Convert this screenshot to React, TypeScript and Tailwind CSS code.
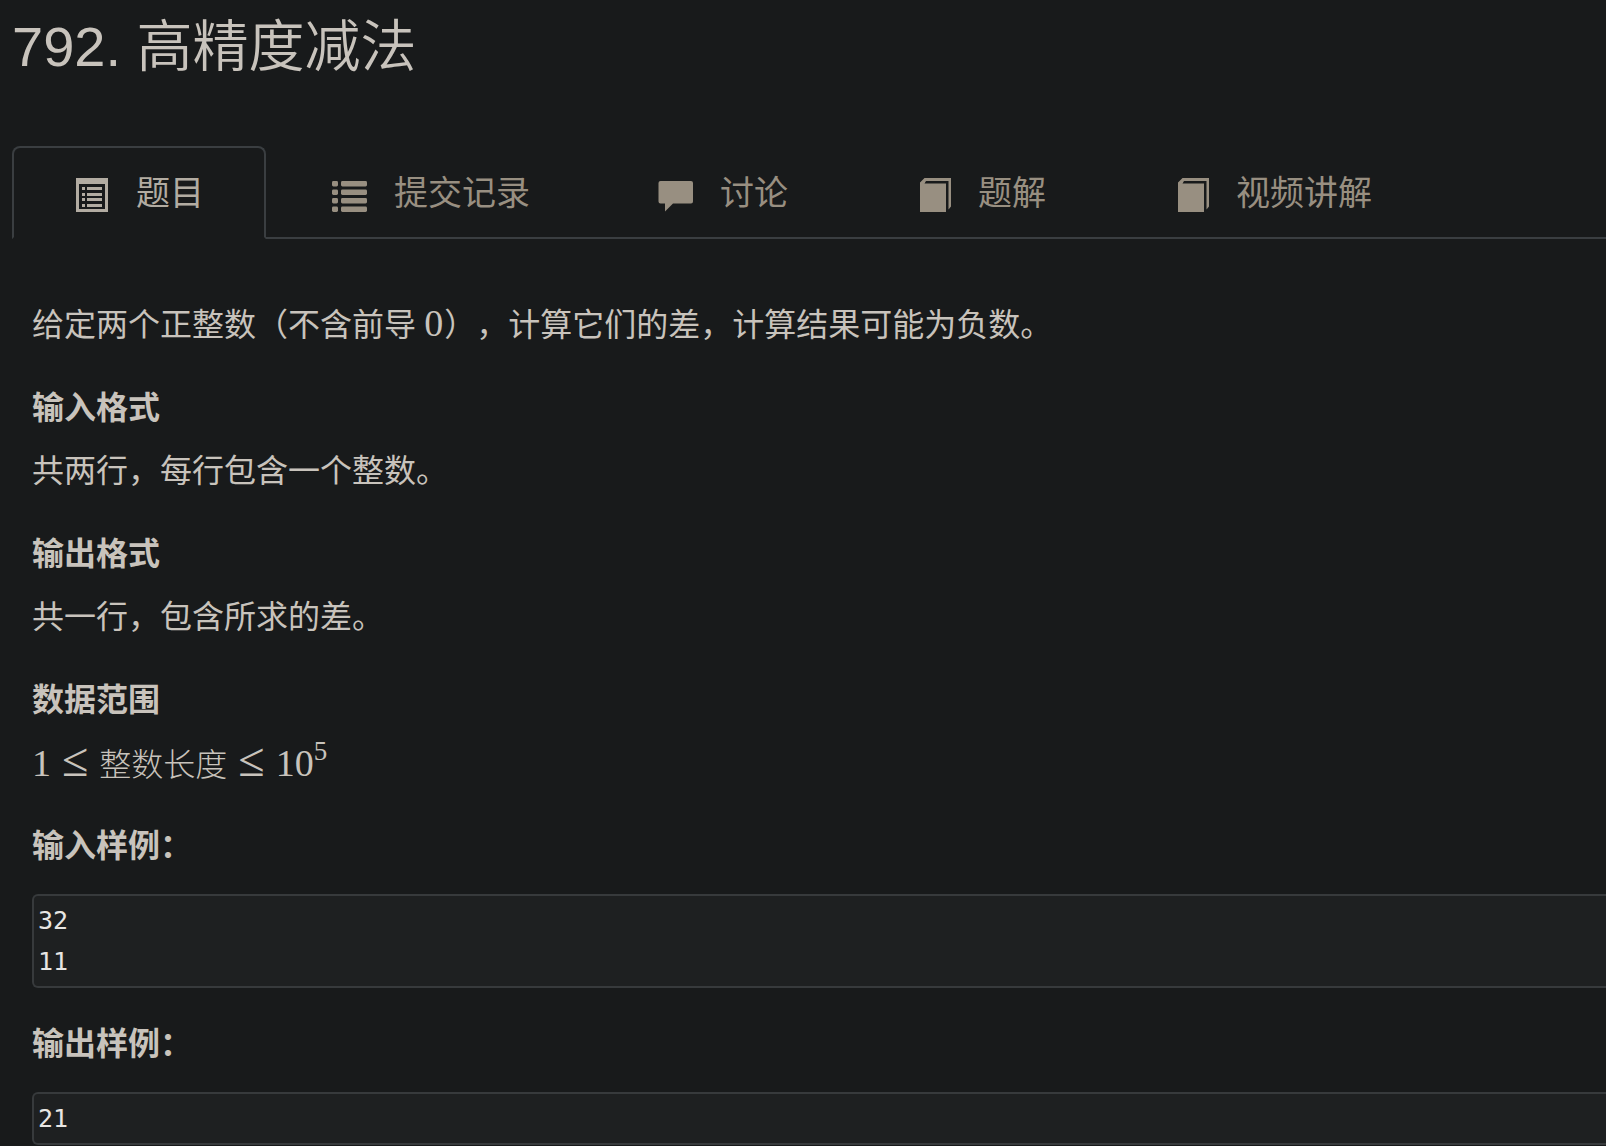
import type { ReactNode } from "react";

function ListAltIcon() {
  return (
    <svg viewBox="0 0 34 34" className="size-[34px]" fill="currentColor" aria-hidden="true">
      <path fillRule="evenodd" d="M2 0h32v34H2zM5 6v25h26V6z" />
      <path d="M8 9h3v3H8zM13 9h15v3H13zM8 15h3v3H8zM13 15h15v3H13zM8 20h3v3H8zM13 20h15v3H13zM8 26h3v3H8zM13 26h15v3H13z" />
    </svg>
  );
}

function ListIcon() {
  const rows = [3, 11.5, 20, 28.5];
  return (
    <svg viewBox="0 0 35 34" className="h-[34px] w-[35px]" fill="currentColor" aria-hidden="true">
      {rows.map((y) => (
        <g key={y}>
          <rect x="0" y={y} width="6" height="5.5" rx="1.4" />
          <rect x="9" y={y} width="26" height="5.5" rx="1.4" />
        </g>
      ))}
    </svg>
  );
}

function CommentIcon() {
  return (
    <svg viewBox="0 0 35 34" className="h-[34px] w-[35px]" fill="currentColor" aria-hidden="true">
      <path d="M2.500 3h30.500a2 2 0 0 1 2 2v18.500a2 2 0 0 1-2 2H15L7 33.500V25.500H2.500a2 2 0 0 1-2-2V5a2 2 0 0 1 2-2z" />
    </svg>
  );
}

function BookIcon() {
  return (
    <svg viewBox="0 0 35 34" className="h-[34px] w-[35px]" fill="currentColor" aria-hidden="true">
      <path d="M4 4.500L8.500 0H35v28.500L32.500 31.500V3H10L8.500 5.500H30V34H4z" />
    </svg>
  );
}

function Tab({ icon, label, active = false }: { icon: ReactNode; label: string; active?: boolean }) {
  return (
    <li className="-mb-0.5">
      <a
        href="#"
        aria-current={active ? "page" : undefined}
        className={
          active
            ? "flex items-center rounded-t-lg border-2 border-[#3a3e41] border-b-[#181a1b] bg-[#181a1b] px-[60px] pt-[21px] pb-[19px] text-[34px] leading-[49px] text-[#b2aca2]"
            : "flex items-center rounded-t-lg border-2 border-transparent px-[60px] pt-[21px] pb-[19px] text-[34px] leading-[49px] text-[#988f81]"
        }
      >
        <span className="mt-0.5 w-[62px]">{icon}</span>
        {label}
      </a>
    </li>
  );
}

function Heading({ children }: { children: ReactNode }) {
  return <h2 className="mt-[37px] text-[32px] leading-[46px] font-bold">{children}</h2>;
}

function Paragraph({ children }: { children: ReactNode }) {
  return <p className="mt-[17px] text-[32px] leading-[46px]">{children}</p>;
}

function Sample({ children }: { children: string }) {
  return (
    <pre className="mt-7 rounded-l-md border-2 border-r-0 border-[#373a3c] bg-[#1e2021] px-1 py-1 font-['DejaVu_Sans_Mono',monospace] text-[25px] leading-[41px] text-[#e8e6e3]">
      {children}
    </pre>
  );
}

function Num({ children }: { children: ReactNode }) {
  return <span className="mx-px font-['Liberation_Serif',serif] text-[38px] leading-[40px]">{children}</span>;
}

function LessEqual() {
  return <span className="font-['Liberation_Serif',serif] text-[48px]">≤</span>;
}

export default function App() {
  return (
    <main className="min-h-screen bg-[#181a1b] pl-3 font-['Liberation_Sans','Noto_Sans_CJK_SC',sans-serif] text-[#c8c3bc]">
      <h1 className="pt-[7px] text-[56px] leading-[80px] font-[350]">792. 高精度减法</h1>

      <nav className="mt-[59px]">
        <ul className="flex gap-1 border-b-2 border-[#3a3e41] whitespace-nowrap">
          <Tab icon={<ListAltIcon />} label="题目" active />
          <Tab icon={<ListIcon />} label="提交记录" />
          <Tab icon={<CommentIcon />} label="讨论" />
          <Tab icon={<BookIcon />} label="题解" />
          <Tab icon={<BookIcon />} label="视频讲解" />
        </ul>
      </nav>

      <article className="pt-[60px] pl-5 font-['Noto_Sans_CJK_SC',sans-serif] [text-spacing-trim:space-all]">
        <p className="text-[32px] leading-[46px]">
          给定两个正整数（不含前导 <Num>0</Num>），计算它们的差，计算结果可能为负数。
        </p>

        <Heading>输入格式</Heading>
        <Paragraph>共两行，每行包含一个整数。</Paragraph>

        <Heading>输出格式</Heading>
        <Paragraph>共一行，包含所求的差。</Paragraph>

        <Heading>数据范围</Heading>
        <p className="mt-[17px] flex h-[46px] items-baseline gap-[11px] font-['Liberation_Serif',serif] text-[38px] leading-[46px]">
          <span>1</span>
          <LessEqual />
          <span className="font-['Noto_Sans_CJK_SC',sans-serif] text-[32px] font-light">整数长度</span>
          <LessEqual />
          <span>
            10<sup className="-top-4 text-[27px]">5</sup>
          </span>
        </p>

        <Heading>输入样例：</Heading>
        <Sample>{"32\n11"}</Sample>

        <h2 className="mt-[30px] text-[32px] leading-[46px] font-bold">输出样例：</h2>
        <Sample>{"21"}</Sample>
      </article>
    </main>
  );
}
